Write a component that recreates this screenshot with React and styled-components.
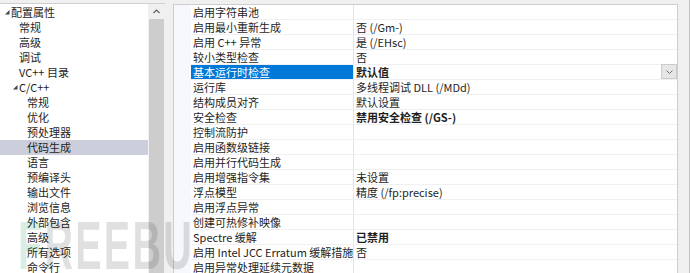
import styled, { createGlobalStyle } from 'styled-components'

const GlobalStyle = createGlobalStyle`
    html, body {
        margin: 0;
        padding: 0;
        height: 273px;
        overflow: hidden;
        background: #f0f0f0;
    }
    body {
        font-family: "Noto Sans CJK SC", "Noto Sans", sans-serif;
        font-size: 11px;
        color: #1e1e1e;
    }
`

const tree = [
    { label: '配置属性', level: 0, open: true },
    { label: '常规', level: 1 },
    { label: '高级', level: 1 },
    { label: '调试', level: 1 },
    { label: 'VC++ 目录', level: 1 },
    { label: 'C/C++', level: 1, open: true },
    { label: '常规', level: 2 },
    { label: '优化', level: 2 },
    { label: '预处理器', level: 2 },
    { label: '代码生成', level: 2, selected: true },
    { label: '语言', level: 2 },
    { label: '预编译头', level: 2 },
    { label: '输出文件', level: 2 },
    { label: '浏览信息', level: 2 },
    { label: '外部包含', level: 2 },
    { label: '高级', level: 2 },
    { label: '所有选项', level: 2 },
    { label: '命令行', level: 2 },
]

const props = [
    { name: '启用字符串池', value: '' },
    { name: '启用最小重新生成', value: '否 (/Gm-)' },
    { name: '启用 C++ 异常', value: '是 (/EHsc)' },
    { name: '较小类型检查', value: '否' },
    { name: '基本运行时检查', value: '默认值', bold: true, selected: true },
    { name: '运行库', value: '多线程调试 DLL (/MDd)' },
    { name: '结构成员对齐', value: '默认设置' },
    { name: '安全检查', value: '禁用安全检查 (/GS-)', bold: true },
    { name: '控制流防护', value: '' },
    { name: '启用函数级链接', value: '' },
    { name: '启用并行代码生成', value: '' },
    { name: '启用增强指令集', value: '未设置' },
    { name: '浮点模型', value: '精度 (/fp:precise)' },
    { name: '启用浮点异常', value: '' },
    { name: '创建可热修补映像', value: '' },
    { name: 'Spectre 缓解', value: '已禁用', bold: true },
    { name: '启用 Intel JCC Erratum 缓解措施', value: '否' },
    { name: '启用异常处理延续元数据', value: '' },
]

const App = () => {
    return (
        <Window>
            <GlobalStyle />
            <TreePanel>
                <TreeList>
                    {tree.map((item, i) => (
                        <TreeRow key={i} $level={item.level} $selected={item.selected}>
                            <Toggle>
                                {item.open && (
                                    <svg width="9" height="15" viewBox="0 0 9 15">
                                        <polygon points="3,9.5 7.5,9.5 7.5,5" fill="#444" />
                                    </svg>
                                )}
                            </Toggle>
                            {item.label}
                        </TreeRow>
                    ))}
                </TreeList>
                <Scrollbar>
                    <ScrollArrow>
                        <svg width="7" height="5" viewBox="0 0 7 5">
                            <polyline points="0.5,4 3.5,1 6.5,4" fill="none" stroke="#606060" strokeWidth="1.2" />
                        </svg>
                    </ScrollArrow>
                    <Thumb />
                </Scrollbar>
            </TreePanel>
            <GridPanel>
                {props.map((p, i) => (
                    <PropRow key={i}>
                        <Margin />
                        <NameCell $selected={p.selected}>{p.name}</NameCell>
                        <ValueCell $bold={p.bold}>
                            <span>{p.value}</span>
                            {p.selected && (
                                <DropButton>
                                    <svg width="7" height="4" viewBox="0 0 7 4">
                                        <polyline points="0.5,0.5 3.5,3.5 6.5,0.5" fill="none" stroke="#707070" strokeWidth="1" />
                                    </svg>
                                </DropButton>
                            )}
                        </ValueCell>
                    </PropRow>
                ))}
            </GridPanel>
            <Watermark>
                <span>F</span>REEBU
            </Watermark>
        </Window>
    )
}

const Window = styled.div`
    position: relative;
    display: flex;
    align-items: flex-start;
    width: 690px;
    height: 273px;
    overflow: hidden;
    background: #f0f0f0;
    box-sizing: border-box;
    border-right: 1px solid #c4c4c4;
`

const TreePanel = styled.div`
    display: flex;
    width: 165px;
    height: 270px;
    margin-top: 3px;
    margin-right: 8px;
    border-top: 1px solid #cfcfcf;
    background: #fff;
    box-sizing: border-box;
`

const TreeList = styled.div`
    flex: 1;
    padding-top: 1px;
`

const TreeRow = styled.div`
    display: flex;
    align-items: center;
    height: 15px;
    line-height: 15px;
    padding-left: ${p => 2 + p.$level * 8}px;
    background: ${p => (p.$selected ? '#cccedb' : 'transparent')};
    white-space: nowrap;
`

const Toggle = styled.span`
    display: flex;
    flex: none;
    width: 9px;
    height: 15px;
`

const Scrollbar = styled.div`
    display: flex;
    flex-direction: column;
    width: 17px;
    background: #f0f0f0;
`

const ScrollArrow = styled.div`
    display: flex;
    align-items: center;
    justify-content: center;
    height: 15px;
`

const Thumb = styled.div`
    flex: 1;
    margin: 0 1px;
    background: #cdcdcd;
`

const GridPanel = styled.div`
    display: flex;
    flex-direction: column;
    width: 505px;
    height: 269px;
    margin-top: 4px;
    border: 1px solid #cdcdcd;
    border-bottom: none;
    background: #fff;
    box-sizing: border-box;
`

const PropRow = styled.div`
    display: grid;
    grid-template-columns: 17px 162px 1fr;
    height: 15px;
    flex: none;
`

const Margin = styled.div`
    background: #f6f8fb;
`

const NameCell = styled.div`
    padding-left: 2px;
    line-height: 14px;
    white-space: nowrap;
    overflow: hidden;
    border-bottom: 1px solid #f0f0f0;
    background: ${p => (p.$selected ? '#0078d7' : 'transparent')};
    color: ${p => (p.$selected ? '#fff' : 'inherit')};
`

const ValueCell = styled.div`
    display: flex;
    justify-content: space-between;
    padding-left: 2px;
    line-height: 14px;
    white-space: nowrap;
    border-left: 1px solid #e4e4e4;
    border-bottom: 1px solid #f0f0f0;
    font-weight: ${p => (p.$bold ? 700 : 400)};
`

const DropButton = styled.div`
    display: flex;
    align-items: center;
    justify-content: center;
    width: 16px;
    height: 15px;
    margin-top: -1px;
    background: #e6e6e6;
    border: 1px solid #cccccc;
    box-sizing: border-box;
`

const Watermark = styled.div`
    position: absolute;
    left: 18px;
    top: 211px;
    font-family: "Liberation Sans", Arial, sans-serif;
    font-weight: 700;
    font-size: 68px;
    line-height: 68px;
    letter-spacing: 4px;
    color: rgba(0, 0, 0, 0.12);
    transform: scaleX(0.58);
    transform-origin: left top;
    pointer-events: none;

    span {
        color: rgba(0, 140, 60, 0.15);
    }
`

export default App
